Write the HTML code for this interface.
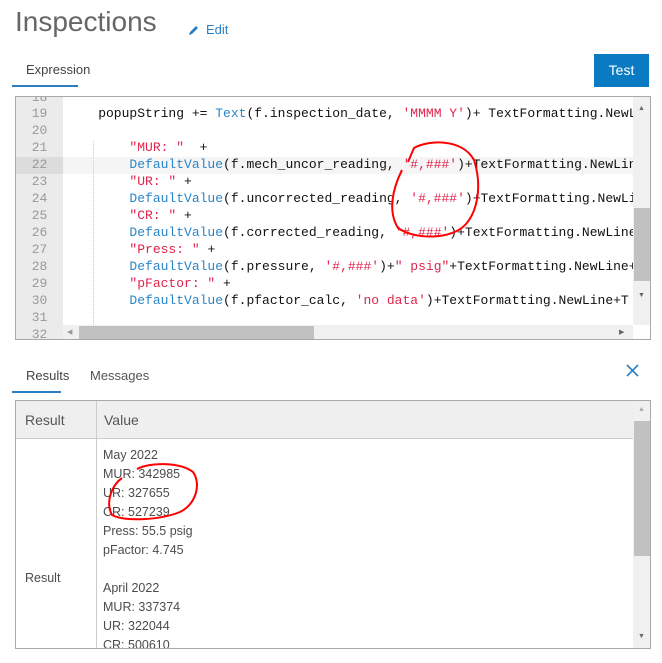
<!DOCTYPE html>
<html><head><style>
*{margin:0;padding:0;box-sizing:border-box}
body{width:662px;height:663px;background:#fff;position:relative;overflow:hidden;font-family:"Liberation Sans",sans-serif;color:#4c4c4c}
.abs{position:absolute}
.ed{left:15px;top:96px;width:636px;height:244px;border:1px solid #a9a9a9;overflow:hidden;background:#fff}
.gut{left:0;top:0;width:47px;height:244px;background:#ebebeb}
.ln{position:absolute;left:0;width:47px;height:17px;line-height:17px;text-align:center;font:13px "Liberation Mono",monospace;color:#999}
.cl{position:absolute;left:51px;height:17px;line-height:17px;font:13px "Liberation Mono",monospace;color:#111;white-space:pre}
.f{color:#2a85c7}.s{color:#e0244b}
.rc{color:#4c4c4c;font-size:12.5px}
</style></head><body>
<div class="abs" style="left:15px;top:6px;font-size:28px;color:#666;font-weight:300">Inspections</div>
<svg class="abs" style="left:187px;top:24px" width="13" height="13" viewBox="0 0 13 13"><path d="M2 11 L3 8 L9 2 L11 4 L5 10 Z" fill="#2a7fc4"/></svg>
<div class="abs" style="left:206px;top:22px;font-size:13px;color:#2a7fc4">Edit</div>
<div class="abs" style="left:26px;top:62px;font-size:13px;color:#444">Expression</div>
<div class="abs" style="left:12px;top:85px;width:66px;height:2px;background:#2a7fc4"></div>
<div class="abs" style="left:594px;top:54px;width:55px;height:33px;background:#0a7ac2;color:#fff;font-size:14px;text-align:center;line-height:33px">Test</div>

<div class="abs ed">
<div class="abs gut"></div>
<div class="abs" style="left:0;top:60px;width:47px;height:17px;background:#dcdcdc"></div>
<div class="abs" style="left:47px;top:60px;width:570px;height:17px;background:#f5f5f5"></div>
<div class="abs" style="left:77px;top:43px;height:185px;border-left:1px dotted #ccc"></div>
<div class="ln" style="top:-7px">18</div><div class="ln" style="top:9px">19</div><div class="ln" style="top:26px">20</div><div class="ln" style="top:43px">21</div><div class="ln" style="top:60px">22</div><div class="ln" style="top:77px">23</div><div class="ln" style="top:94px">24</div><div class="ln" style="top:111px">25</div><div class="ln" style="top:128px">26</div><div class="ln" style="top:145px">27</div><div class="ln" style="top:162px">28</div><div class="ln" style="top:179px">29</div><div class="ln" style="top:196px">30</div><div class="ln" style="top:213px">31</div><div class="ln" style="top:230px">32</div>
<div class="cl" style="top:9px">    popupString += <span class="f">Text</span>(f.inspection_date, <span class="s">'MMMM Y'</span>)+ TextFormatting.NewLine</div>
<div class="cl" style="top:43px">        <span class="s">"MUR: "</span>  +</div>
<div class="cl" style="top:60px">        <span class="f">DefaultValue</span>(f.mech_uncor_reading, <span class="s">'#,###'</span>)+TextFormatting.NewLine</div>
<div class="cl" style="top:77px">        <span class="s">"UR: "</span> +</div>
<div class="cl" style="top:94px">        <span class="f">DefaultValue</span>(f.uncorrected_reading, <span class="s">'#,###'</span>)+TextFormatting.NewLine</div>
<div class="cl" style="top:111px">        <span class="s">"CR: "</span> +</div>
<div class="cl" style="top:128px">        <span class="f">DefaultValue</span>(f.corrected_reading, <span class="s">'#,###'</span>)+TextFormatting.NewLine</div>
<div class="cl" style="top:145px">        <span class="s">"Press: "</span> +</div>
<div class="cl" style="top:162px">        <span class="f">DefaultValue</span>(f.pressure, <span class="s">'#,###'</span>)+<span class="s">" psig"</span>+TextFormatting.NewLine+</div>
<div class="cl" style="top:179px">        <span class="s">"pFactor: "</span> +</div>
<div class="cl" style="top:196px">        <span class="f">DefaultValue</span>(f.pfactor_calc, <span class="s">'no data'</span>)+TextFormatting.NewLine+T</div>
<div class="abs" style="left:617px;top:0;width:18px;height:228px;background:#f0f0f0"></div>
<div class="abs" style="left:618px;top:111px;width:16px;height:73px;background:#c1c1c1"></div>
<div class="abs" style="left:47px;top:228px;width:570px;height:16px;background:#f0f0f0"></div>
<div class="abs" style="left:63px;top:229px;width:235px;height:14px;background:#c1c1c1"></div>
<div class="abs" style="left:622px;top:8px;font-size:7px;color:#666">▲</div>
<div class="abs" style="left:622px;top:195px;font-size:7px;color:#666">▼</div>
<div class="abs" style="left:51px;top:231px;font-size:7px;color:#999">◀</div>
<div class="abs" style="left:603px;top:231px;font-size:7px;color:#666">▶</div>
</div>

<div class="abs" style="left:26px;top:368px;font-size:13px;color:#444">Results</div>
<div class="abs" style="left:90px;top:368px;font-size:13px;color:#555">Messages</div>
<div class="abs" style="left:12px;top:391px;width:49px;height:2px;background:#2a7fc4"></div>
<svg class="abs" style="left:626px;top:364px" width="13" height="13"><path d="M1 1L12 12M12 1L1 12" stroke="#2a7fc4" stroke-width="1.6"/></svg>

<div class="abs" style="left:15px;top:400px;width:636px;height:249px;border:1px solid #a9a9a9;overflow:hidden">
<div class="abs" style="left:0;top:0;width:617px;height:38px;background:#efefef;border-bottom:1px solid #ccc"></div>
<div class="abs" style="left:80px;top:0;width:1px;height:249px;background:#ccc"></div>
<div class="abs" style="left:9px;top:11px;font-size:14px;color:#555">Result</div>
<div class="abs" style="left:88px;top:11px;font-size:14px;color:#555">Value</div>
<div class="abs" style="left:9px;top:170px;font-size:12.5px">Result</div>
<div class="abs rc" style="left:87px;top:45px;line-height:19px">May 2022<br>MUR: 342985<br>UR: 327655<br>CR: 527239<br>Press: 55.5 psig<br>pFactor: 4.745<br><br>April 2022<br>MUR: 337374<br>UR: 322044<br>CR: 500610</div>
<div class="abs" style="left:617px;top:0;width:18px;height:249px;background:#f0f0f0"></div>
<div class="abs" style="left:618px;top:20px;width:16px;height:135px;background:#c1c1c1"></div>
<div class="abs" style="left:622px;top:5px;font-size:7px;color:#aaa">▲</div>
<div class="abs" style="left:622px;top:232px;font-size:7px;color:#666">▼</div>
</div>

<svg class="abs" style="left:0;top:0" width="662" height="663">
<path d="M408 162 L414 148 C428 140 462 138 474 160 C482 185 478 210 466 224 C452 240 415 240 398 228 C388 212 392 190 402 170" fill="none" stroke="#f00" stroke-width="2"/>
<path d="M137 469 C150 462 180 462 193 472 C202 485 195 505 180 512 C160 520 125 522 112 515 C105 502 112 485 122 478" fill="none" stroke="#f00" stroke-width="2"/>
</svg>
</body></html>
